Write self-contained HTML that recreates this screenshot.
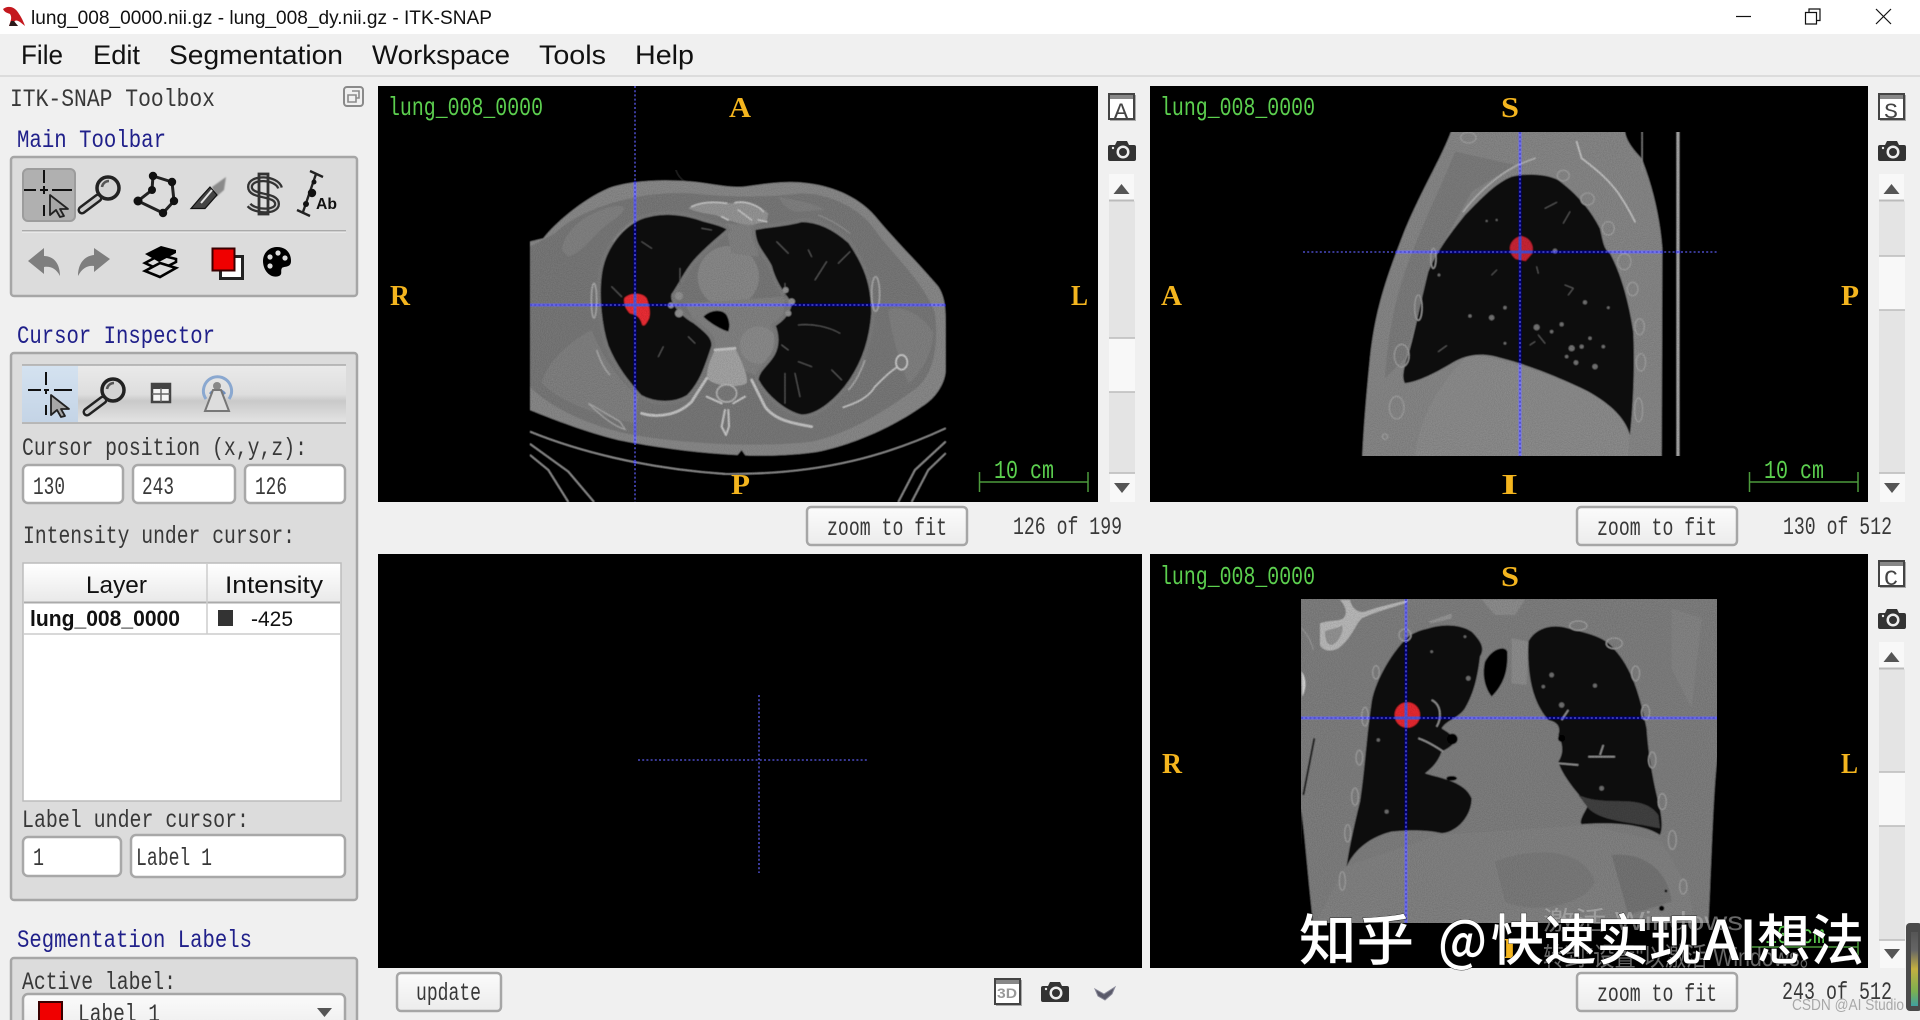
<!DOCTYPE html>
<html lang="zh"><head><meta charset="utf-8"><title>ITK-SNAP</title>
<style>
html,body{margin:0;padding:0;background:#f0f0f0;width:1920px;height:1020px;overflow:hidden}
svg{display:block}
.m{font-family:"Liberation Mono",monospace;font-size:25px;fill:#383838}
.h{font-family:"Liberation Mono",monospace;font-size:25px;fill:#20208a}
.g{font-family:"Liberation Mono",monospace;font-size:26px;fill:#5ccf4f}
.o{font-family:"Liberation Serif",serif;font-weight:bold;font-size:28px;fill:#f4b51e}
.s{font-family:"Liberation Sans",sans-serif;fill:#111}
.box{fill:#dcdcdc;stroke:#a6a6a6;stroke-width:2.5}
.inp{fill:#fff;stroke:#a8a8a8;stroke-width:2.5}
.btn{fill:url(#btn);stroke:#a6a6a6;stroke-width:2.5}
.x{stroke:#4a4ac4;stroke-width:1.6;stroke-dasharray:2 2.2;fill:none}
.xb{stroke:#5a5ad8;stroke-width:3;fill:none;mix-blend-mode:color}
.lung{fill:#0d0d0d}
.bone{fill:none;stroke:#bcbcbc;stroke-linecap:round;stroke-linejoin:round}
.rib{fill:none;stroke:#989898;stroke-width:4}
.ves{fill:none;stroke:#626262;stroke-width:2.5;stroke-linecap:round}
.wm{font-family:"Noto Sans CJK SC",sans-serif;font-size:55px;font-weight:500;fill:#fff;stroke:#111;stroke-width:.8;paint-order:stroke}
</style></head><body>
<svg xmlns="http://www.w3.org/2000/svg" width="1920" height="1020" viewBox="0 0 1920 1020">
<defs>
<linearGradient id="btn" x1="0" y1="0" x2="0" y2="1"><stop offset="0" stop-color="#fbfbfb"/><stop offset="1" stop-color="#ececec"/></linearGradient>
<linearGradient id="strip" x1="0" y1="0" x2="0" y2="1"><stop offset="0" stop-color="#eaeaea"/><stop offset=".5" stop-color="#dedede"/><stop offset=".62" stop-color="#c9c9c9"/><stop offset="1" stop-color="#e4e4e4"/></linearGradient>
<linearGradient id="sel" x1="0" y1="0" x2="0" y2="1"><stop offset="0" stop-color="#d4e2f0"/><stop offset="1" stop-color="#c4d4e6"/></linearGradient>
<linearGradient id="hd" x1="0" y1="0" x2="0" y2="1"><stop offset="0" stop-color="#fff"/><stop offset="1" stop-color="#e9e9e9"/></linearGradient>
<linearGradient id="vm" x1="0" y1="0" x2="0" y2="1"><stop offset="0" stop-color="#555"/><stop offset=".25" stop-color="#666"/><stop offset=".5" stop-color="#c4b040"/><stop offset=".8" stop-color="#7cb050"/><stop offset="1" stop-color="#40a0a0"/></linearGradient>
<filter id="soft" filterUnits="userSpaceOnUse" x="0" y="0" width="1300" height="1010">
<feGaussianBlur in="SourceGraphic" stdDeviation="1.8" result="b"/>
<feTurbulence type="fractalNoise" baseFrequency=".33" numOctaves="2" seed="4" result="n"/>
<feColorMatrix in="n" type="matrix" values="1 0 0 0 0 1 0 0 0 0 1 0 0 0 0 0 0 0 0 1" result="g"/>
<feComposite in="b" in2="g" operator="arithmetic" k1=".5" k2=".74" k3="0" k4="0"/>
</filter>
<filter id="bl"><feGaussianBlur stdDeviation=".8"/></filter>
<clipPath id="cTL"><rect x="378" y="86" width="720" height="416"/></clipPath>
<clipPath id="cTR"><rect x="1302" y="132" width="415" height="324"/></clipPath>
<clipPath id="cBR"><rect x="1301" y="599" width="416" height="324"/></clipPath>
<g id="cam"><path d="M-12,-6 h5 l2,-4 h10 l2,4 h5 a2,2 0 0 1 2,2 v12 a2,2 0 0 1 -2,2 h-24 a2,2 0 0 1 -2,-2 v-12 a2,2 0 0 1 2,-2z" fill="#333"/><circle cx="1" cy="1" r="6.5" fill="#eee"/><circle cx="1" cy="1" r="4" fill="#333"/><circle cx="-9" cy="-3" r="1.2" fill="#eee"/></g>
<g id="win"><rect x="2" y="2" width="26" height="26" fill="#aaa"/><rect x="1" y="1" width="25" height="25" fill="#fff" stroke="#444" stroke-width="2"/><rect x="2" y="2" width="23" height="4" fill="#888"/></g>
<g id="scr"><path d="M1,0 h25 v26 h-25z" fill="#f8f8f8"/><path d="M5.5,20 L13.5,10 L21.5,20z" fill="#555"/><line x1="1" y1="26.5" x2="26" y2="26.5" stroke="#bbb" stroke-width="2"/></g>
<g id="mag"><path d="M-8,8 L-24,20" stroke="#222" stroke-width="9" stroke-linecap="round"/><path d="M-8,8 L-24,20" stroke="#ccc" stroke-width="4" stroke-linecap="round"/><circle cx="2" cy="-2" r="11" fill="#d4d4d4" stroke="#222" stroke-width="3.5"/><path d="M-4,-3 a7,7 0 0 1 7,-6" stroke="#555" stroke-width="2.5" fill="none"/></g>
<g id="arr"><path d="M0,0 L18,14 L10,14 L14,21 L10,22 L6,15 L0,20z" fill="#a6a6a6" stroke="#222" stroke-width="1.8" stroke-linejoin="round"/></g>
</defs>

<rect width="1920" height="1020" fill="#f0f0f0"/>
<!-- title bar -->
<rect width="1920" height="34" fill="#fff"/>
<path d="M3,9 C8,5 14,7 17,11 C20,15 23,20 25,26 L20,22 C17,20 15,20 14,22 L18,26 L9,26 L10,23 C11,20 12,17 10,14 C8,13 5,13 3,9z" fill="#c4181e"/>
<path d="M14,21 L18,26 L9,26 L11,21z" fill="#2b1a1a"/>
<text class="s" x="31" y="24" font-size="19" textLength="461" lengthAdjust="spacingAndGlyphs">lung_008_0000.nii.gz - lung_008_dy.nii.gz - ITK-SNAP</text>
<path d="M1736,16.5 h15" stroke="#111" stroke-width="1.2"/>
<path d="M1805.5,12.5 h11 v11.5 h-11z M1809,12.5 v-3.5 h11 v11.5 h-3.5" fill="none" stroke="#111" stroke-width="1.2"/>
<path d="M1876,9 L1891,24 M1891,9 L1876,24" stroke="#111" stroke-width="1.2"/>
<!-- menu -->
<rect y="75" width="1920" height="2" fill="#dcdcdc"/>
<g class="s" font-size="27">
<text x="21" y="64" textLength="42" lengthAdjust="spacingAndGlyphs">File</text>
<text x="93" y="64" textLength="47" lengthAdjust="spacingAndGlyphs">Edit</text>
<text x="169" y="64" textLength="174" lengthAdjust="spacingAndGlyphs">Segmentation</text>
<text x="372" y="64" textLength="138" lengthAdjust="spacingAndGlyphs">Workspace</text>
<text x="539" y="64" textLength="67" lengthAdjust="spacingAndGlyphs">Tools</text>
<text x="635" y="64" textLength="59" lengthAdjust="spacingAndGlyphs">Help</text>
</g>

<!-- sidebar -->
<text class="m" x="10" y="106" font-size="26" textLength="205" lengthAdjust="spacingAndGlyphs">ITK-SNAP Toolbox</text>
<rect x="344" y="87" width="19" height="19" rx="3" fill="none" stroke="#8a8a8a" stroke-width="2"/>
<path d="M352,91 h7 v7 h-3 M348,95 h8 v7 h-8z" fill="none" stroke="#8a8a8a" stroke-width="1.6"/>
<text class="h" x="17" y="147" textLength="149" lengthAdjust="spacingAndGlyphs">Main Toolbar</text>
<rect class="box" x="11" y="157" width="346" height="139" rx="3"/>
<rect x="23" y="169" width="52" height="52" rx="5" fill="#b0b0b0" stroke="#9c9c9c" stroke-width="2"/>
<path d="M44,170 v13 M44,186 v8 M44,205 v11 M24,190 h12 M40,190 h8 M52,190 h20" stroke="#111" stroke-width="2"/>
<use href="#arr" x="50" y="195"/>
<use href="#mag" x="106" y="190"/>
<path d="M153,176 L172,182 L174,201 L163,213 L138,201 L152,190z" fill="none" stroke="#222" stroke-width="3"/>
<g fill="#111"><circle cx="153" cy="176" r="4.2"/><circle cx="172" cy="182" r="4.2"/><circle cx="174" cy="201" r="4.2"/><circle cx="163" cy="213" r="4.2"/><circle cx="138" cy="201" r="4.5"/><circle cx="152" cy="190" r="4"/></g>
<path d="M212,187 L226,177 L224,190 L216,197z" fill="#8a8a8a" filter="url(#bl)"/>
<path d="M191,208.500 L205,208.500 L217,195 L210,187 L200,198z" fill="#444" stroke="#111" stroke-width="1.2"/>
<path d="M201,203 L212,190" stroke="#e4e4e4" stroke-width="2"/>
<path d="M280,188 C277,177 250,176 250,187 C250,198 277,193 277,204 C277,213 255,212 249,205" fill="none" stroke="#333" stroke-width="6"/>
<path d="M280,188 C277,177 250,176 250,187 C250,198 277,193 277,204 C277,213 255,212 249,205" fill="none" stroke="#ccc" stroke-width="1.5"/>
<rect x="259" y="174" width="9" height="40" fill="none" stroke="#333" stroke-width="2.8"/>
<path d="M316,174 L303,212 M310,171 L323,177 M297,210 L310,216" stroke="#222" stroke-width="2.4"/>
<circle cx="312" cy="193" r="4.2" fill="#111"/><circle cx="306" cy="204" r="3" fill="#111"/><circle cx="314" cy="182" r="2.5" fill="#111"/>
<text class="s" x="316" y="209" font-size="16" font-weight="bold" fill="#222" textLength="21" lengthAdjust="spacingAndGlyphs">Ab</text>
<rect x="22" y="230" width="324" height="1.5" fill="#aaa"/><rect x="22" y="231.5" width="324" height="1" fill="#f4f4f4"/>
<path d="M28,261 L44,248 L44,256 C54,256 60,264 60,276 C56,268 50,266 44,267 L44,274z" fill="#7e7e7e"/>
<path d="M110,259 L94,248 L94,255 C84,256 78,264 78,276 C82,268 88,265 94,266 L94,272z" fill="#7e7e7e"/>
<path d="M160,255 L176,259 L176,262 L160,270 L145,263z" fill="#dcdcdc" stroke="#000" stroke-width="2.6"/>
<path d="M160,263 L176,268 L160,277 L145,271z" fill="#dcdcdc" stroke="#000" stroke-width="2.6"/>
<path d="M161,246 L176,250 L176,253 L159,262 L145,254z" fill="#000"/>
<rect x="220.500" y="256.500" width="22" height="22" fill="#fff" stroke="#222" stroke-width="3"/>
<rect x="212.500" y="248.500" width="22" height="22" fill="#f00000" stroke="#3a0000" stroke-width="2"/>
<path d="M277,247 C287,247 291,254 291,261 C291,268 284,266 282,268 C280,271 283,274 279,276 C270,279 263,270 263,261 C263,253 269,247 277,247z" fill="#000"/>
<g fill="#dcdcdc"><circle cx="270" cy="257" r="2.6"/><circle cx="278" cy="253" r="2.6"/><circle cx="285" cy="258" r="2.6"/><circle cx="270" cy="266" r="2.6"/></g>

<text class="h" x="17" y="343" textLength="198" lengthAdjust="spacingAndGlyphs">Cursor Inspector</text>
<rect class="box" x="11" y="353" width="346" height="547" rx="3"/>
<rect x="22" y="365" width="324" height="58" fill="url(#strip)"/>
<rect x="22" y="366" width="56" height="56" fill="url(#sel)"/>
<path d="M22,365 h324 M22,423 h324" stroke="#aaa" stroke-width="1.5"/>
<path d="M46,372 v13 M46,389 v5 M46,405 v10 M28,390 h13 M44,390 h5 M54,390 h18" stroke="#111" stroke-width="2"/>
<use href="#arr" x="51" y="395"/>
<use href="#mag" x="111" y="392"/>
<rect x="152" y="384" width="18" height="18" fill="#f4f4f4" stroke="#444" stroke-width="2.5"/>
<path d="M152,387 h18" stroke="#444" stroke-width="4"/><path d="M161,388 v14 M152,394 h18" stroke="#666" stroke-width="1.5"/>
<path d="M206,399 a14,14 0 0 1 -2,-12 a14,14 0 0 1 27,0 a14,14 0 0 1 -2,12" fill="none" stroke="#8aa8d0" stroke-width="3"/>
<path d="M210,394 a9,9 0 0 1 15,0" fill="none" stroke="#7090c0" stroke-width="2.5"/>
<circle cx="217" cy="386" r="4" fill="#888"/>
<path d="M213,390 h8 l8,21 h-24z" fill="#ddd" stroke="#777" stroke-width="2"/>
<text class="m" x="22" y="455" font-size="24" textLength="285" lengthAdjust="spacingAndGlyphs">Cursor position (x,y,z):</text>
<rect class="inp" x="23" y="465" width="100" height="38" rx="5"/><rect class="inp" x="133" y="465" width="102" height="38" rx="5"/><rect class="inp" x="245" y="465" width="100" height="38" rx="5"/>
<text class="m" x="33" y="494" font-size="23" textLength="32" lengthAdjust="spacingAndGlyphs">130</text>
<text class="m" x="142" y="494" font-size="23" textLength="32" lengthAdjust="spacingAndGlyphs">243</text>
<text class="m" x="255" y="494" font-size="23" textLength="32" lengthAdjust="spacingAndGlyphs">126</text>
<text class="m" x="23" y="543" font-size="24" textLength="272" lengthAdjust="spacingAndGlyphs">Intensity under cursor:</text>
<rect x="23" y="563" width="318" height="238" fill="#fff" stroke="#bbb" stroke-width="1.5"/>
<rect x="24" y="564" width="316" height="38" fill="url(#hd)"/>
<path d="M24,602.500 h316" stroke="#aaa" stroke-width="2"/><path d="M207,564 V634" stroke="#ccc" stroke-width="1.5"/><path d="M24,634 h316" stroke="#ccc" stroke-width="1.5"/>
<text class="s" x="86" y="593" font-size="24" textLength="61" lengthAdjust="spacingAndGlyphs">Layer</text>
<text class="s" x="225" y="593" font-size="24" textLength="98" lengthAdjust="spacingAndGlyphs">Intensity</text>
<text class="s" x="30" y="626" font-size="22" font-weight="bold" textLength="150" lengthAdjust="spacingAndGlyphs">lung_008_0000</text>
<rect x="218" y="610" width="15" height="16" fill="#333"/>
<text class="s" x="251" y="626" font-size="21" fill="#222" textLength="42" lengthAdjust="spacingAndGlyphs">-425</text>
<text class="m" x="22" y="827" font-size="24" textLength="227" lengthAdjust="spacingAndGlyphs">Label under cursor:</text>
<rect class="inp" x="23" y="837" width="98" height="39" rx="5"/><rect class="inp" x="131" y="835" width="214" height="42" rx="5"/>
<text class="m" x="33" y="865" font-size="23" textLength="11" lengthAdjust="spacingAndGlyphs">1</text>
<text class="m" x="136" y="865" font-size="23" textLength="76" lengthAdjust="spacingAndGlyphs">Label 1</text>
<text class="h" x="17" y="947" textLength="235" lengthAdjust="spacingAndGlyphs">Segmentation Labels</text>
<rect class="box" x="11" y="958" width="346" height="70" rx="3"/>
<text class="m" x="22" y="989" font-size="24" textLength="154" lengthAdjust="spacingAndGlyphs">Active label:</text>
<rect class="btn" x="23" y="994" width="322" height="40" rx="5"/>
<rect x="39" y="1002" width="23" height="24" fill="#f00000" stroke="#3a0000" stroke-width="2"/>
<text class="m" x="78" y="1021" font-size="24" textLength="82" lengthAdjust="spacingAndGlyphs">Label 1</text>
<path d="M317,1008 h15 l-7.500,9z" fill="#555"/>

<!-- viewports -->
<rect x="378" y="86" width="720" height="416" fill="#000"/>
<rect x="1150" y="86" width="718" height="416" fill="#000"/>
<rect x="378" y="554" width="764" height="414" fill="#000"/>
<rect x="1150" y="554" width="718" height="414" fill="#000"/>

<!-- axial -->
<g clip-path="url(#cTL)"><g transform="translate(525 170) scale(.3333)"><g filter="url(#soft)">
<rect x="15" y="-250" width="1250" height="1250" fill="#050505"/>
<g fill="none" stroke="#989898" stroke-width="4">
<path d="M15,785 C150,840 350,895 600,912 C900,915 1100,850 1262,775"/>
<path d="M15,822 L130,905 L207,996 M15,855 L70,900 L130,996 M1262,815 L1170,900 L1120,996 M1262,850 L1210,900 L1160,996"/>
</g>
<path d="M450,-15 C455,40 520,60 560,50" fill="none" stroke="#2c2c2c" stroke-width="3"/>
<path d="M15,215 L55,205 C90,160 170,90 250,55 C320,30 420,28 500,35 C560,40 610,55 660,50 C720,42 780,30 850,40 C930,50 1010,85 1060,150 C1110,210 1190,290 1240,350 C1262,385 1262,420 1262,470 L1262,600 C1262,630 1240,680 1190,710 C1120,760 1000,820 880,845 C820,855 720,860 640,855 C520,850 380,830 280,810 C180,785 90,750 15,720z" fill="#828282"/>
<path d="M90,190 C160,120 330,60 500,70 C600,80 700,85 830,70 C920,70 1010,120 1050,180 C1100,250 1200,340 1230,430 C1240,520 1230,600 1180,650 C1100,710 980,790 860,815 C700,835 450,820 300,790 C170,760 60,700 15,650 L15,230z" fill="#727272"/>
<path d="M110,240 C120,180 180,130 260,110 C320,100 300,130 250,160 C210,190 170,250 130,260z" fill="#7c7c7c"/>
<path d="M760,80 C800,90 860,95 900,120 L820,125 C790,125 770,100 760,80z" fill="#7a7a7a"/>
<path d="M50,640 C60,590 120,520 200,480 C230,560 290,640 340,680 L330,760 C230,740 110,700 50,640z" fill="#7a7a7a"/>
<path d="M1090,420 C1130,400 1200,440 1225,490 C1220,560 1180,620 1150,640 C1120,560 1100,500 1090,420z" fill="#7a7a7a"/>
<circle cx="610" cy="320" r="92" fill="#828282"/>
<path d="M600,160 L690,165 L700,260 L620,250z" fill="#7c7c7c"/>
<path d="M480,400 L780,380 L770,500 L700,620 L560,560z" fill="#7c7c7c"/>
<circle cx="700" cy="525" r="56" fill="#848484"/>
<g stroke="#767676" stroke-width="12">
<path class="lung" d="M225,310 C235,240 280,175 340,145 C400,120 470,125 540,150 C580,160 610,170 612,180 C590,200 550,230 510,275 C480,310 470,340 445,375 C440,400 480,440 510,455 C540,480 570,500 565,530 C545,590 530,640 490,680 C450,705 390,705 345,680 C300,630 270,590 245,530 C225,470 215,380 225,310z"/>
<path class="lung" d="M685,175 C730,165 780,165 830,150 C880,150 930,175 975,215 C1020,280 1045,340 1045,430 C1040,500 1020,570 980,630 C940,690 880,740 830,740 C780,730 720,680 695,630 C695,600 730,580 745,550 C760,520 755,490 745,465 C770,450 790,430 795,400 C770,370 745,330 735,290 C715,250 685,230 685,175z"/>
</g>
<path d="M535,440 C555,420 590,415 605,435 C615,455 615,470 610,485 C590,480 555,460 535,440z" fill="#000"/>
<path d="M490,115 C520,95 580,95 620,100 C650,90 700,100 730,130 L725,155 L680,165 C640,165 600,145 570,135 C540,130 510,125 490,115z" fill="#8e8e8e"/>
<g class="bone" stroke-width="5"><path d="M500,110 C530,95 570,95 605,100 M630,98 C660,92 700,105 715,125 M590,140 L610,150 M640,120 L680,150 M700,150 L725,155"/></g>
<path d="M570,540 L630,535 C650,570 670,620 665,640 C640,655 570,650 545,625 C545,590 560,560 570,540z" fill="#9c9c9c"/>
<g class="bone"><path stroke-width="8" d="M350,730 C400,745 460,735 500,695 L545,625 M860,770 C800,760 750,750 720,710 L680,630 M570,540 L630,535"/>
<path stroke-width="6" d="M545,680 L590,700 M660,680 L625,700 M600,720 L590,770 L603,795 L612,770 L610,720"/>
<path stroke-width="5" d="M955,712 C990,700 1030,685 1050,650 C1075,625 1100,600 1120,590"/></g>
<ellipse cx="1130" cy="577" rx="17" ry="22" fill="#777" stroke="#c4c4c4" stroke-width="5"/>
<ellipse cx="605" cy="670" rx="30" ry="26" fill="#747474" stroke="#aaa" stroke-width="5"/>
<g fill="none" stroke="#a0a0a0" stroke-width="5"><ellipse cx="207" cy="392" rx="8" ry="52"/><ellipse cx="1052" cy="372" rx="12" ry="52"/><path d="M215,540 C225,570 240,600 255,615"/><path d="M1020,570 C1010,600 990,640 970,660"/><path d="M190,700 C230,740 270,770 300,778 L285,755 C250,735 210,710 190,700" stroke-width="4"/><path d="M265,215 C285,185 310,165 335,150" stroke-width="3" stroke="#8c8c8c"/><path d="M880,135 C920,150 950,170 975,190" stroke-width="3" stroke="#8c8c8c"/></g>
<g class="ves"><path d="M350,215 L380,235 M530,175 L560,180 M755,215 L790,250 M850,240 L860,260 M870,330 L905,275 M940,280 L975,245 M465,295 L465,345 M780,340 V380 M820,465 C860,460 910,470 945,490 M400,560 L415,530 M490,500 L510,520 M820,575 L860,590 M780,610 L780,700 M810,610 L825,680 M770,525 L790,540 M920,600 L950,630 M260,350 L290,380"/></g>
<g fill="#8a8a8a"><circle cx="462" cy="378" r="12"/><circle cx="438" cy="406" r="9"/><circle cx="462" cy="430" r="12"/><circle cx="782" cy="360" r="9"/><circle cx="800" cy="395" r="10"/><circle cx="790" cy="430" r="9"/></g>
<path d="M298,385 C310,370 350,365 365,385 C372,405 378,425 372,445 C365,460 358,470 352,465 C345,440 335,435 315,430 C305,420 295,405 298,385z" fill="#e02a30"/>
<path d="M632,862 L650,840 L665,862z" fill="#000"/>
</g></g></g>
<!-- sagittal -->
<g clip-path="url(#cTR)"><g transform="translate(1295 125) scale(.3333)"><g filter="url(#soft)">
<rect x="15" y="21" width="1250" height="972" fill="#060606"/>
<path d="M470,15 C440,100 370,210 320,340 C270,470 240,560 225,700 C210,850 205,930 202,1000 L1100,1000 L1102,370 C1095,280 1075,190 1040,100 C1010,70 990,40 990,15z" fill="#808080"/>
<path d="M480,80 C450,160 400,260 360,360 C310,480 280,600 270,760 L330,700 L420,400 L530,200 L660,120z" fill="#767676"/>
<path d="M360,1000 C370,880 430,780 520,690 C600,690 800,760 890,805 C950,840 990,880 1003,935 L1000,1000z" fill="#858585"/>
<path class="lung" d="M650,155 C690,145 750,145 790,165 C850,210 890,260 915,310 C925,350 925,370 945,385 C975,440 1000,520 1015,620 C1020,720 1015,840 1005,930 C990,880 950,840 880,800 C800,760 700,720 620,700 C560,680 510,690 470,715 C420,745 370,770 330,775 C320,760 325,730 340,690 C360,620 375,540 400,440 C430,370 470,320 510,270 C560,220 600,175 650,155z" fill="#131313"/>
<rect x="1145" y="15" width="8" height="985" fill="#a6a6a6"/><rect x="1040" y="15" width="3" height="125" fill="#8a8a8a"/>
<g class="bone"><path stroke-width="5" d="M505,260 C550,200 620,140 680,115 L720,100" stroke="#a8a8a8"/><path stroke-width="5" d="M845,50 L860,100 C900,130 950,170 980,220 C1000,250 1015,280 1020,290"/></g>
<g class="rib"><ellipse cx="520" cy="38" rx="23" ry="16"/><ellipse cx="805" cy="152" rx="18" ry="16"/><ellipse cx="878" cy="222" rx="20" ry="18"/><ellipse cx="940" cy="310" rx="18" ry="20"/><ellipse cx="988" cy="410" rx="20" ry="24"/><ellipse cx="1013" cy="492" rx="16" ry="20"/><ellipse cx="1034" cy="605" rx="14" ry="24"/><ellipse cx="1038" cy="712" rx="14" ry="26"/><ellipse cx="1031" cy="855" rx="12" ry="36"/><ellipse cx="320" cy="692" rx="22" ry="34"/><ellipse cx="370" cy="548" rx="11" ry="38"/><ellipse cx="415" cy="400" rx="8" ry="30"/><ellipse cx="305" cy="848" rx="22" ry="34"/><ellipse cx="270" cy="935" rx="8" ry="8"/></g>
<g fill="#6e6e6e"><circle cx="725" cy="607" r="9"/><circle cx="590" cy="578" r="8"/><circle cx="830" cy="670" r="9"/><circle cx="800" cy="598" r="6"/><circle cx="843" cy="713" r="7"/><circle cx="900" cy="725" r="8"/><circle cx="860" cy="665" r="6"/><circle cx="815" cy="695" r="5"/><circle cx="885" cy="640" r="5"/><circle cx="630" cy="548" r="5"/><circle cx="525" cy="573" r="5"/><circle cx="870" cy="532" r="6"/><circle cx="770" cy="620" r="5"/><circle cx="940" cy="548" r="4"/><circle cx="780" cy="378" r="7"/><circle cx="630" cy="655" r="4"/><circle cx="925" cy="665" r="5"/><circle cx="432" cy="450" r="4"/><circle cx="575" cy="288" r="3"/><circle cx="605" cy="285" r="3"/></g>
<g class="ves"><path d="M750,250 L785,232 M805,295 L825,260 M590,450 L605,435 M430,680 L455,662 M730,630 L750,655 M725,425 L730,445 M810,480 L835,490 M705,660 L720,650 M820,510 L835,490"/></g>
<path d="M677,333 C705,338 718,360 712,385 L692,408 L662,402 C635,380 640,345 677,333z" fill="#c02030"/>
</g></g></g>
<!-- coronal -->
<g clip-path="url(#cBR)"><g transform="translate(1295 595) scale(.3333)"><g filter="url(#soft)">
<rect x="15" y="10" width="1255" height="980" fill="#787878"/>
<path d="M560,14 L690,14 L660,60 L600,60z" fill="#868686"/>
<path d="M400,80 L470,55 L470,70 L410,85z" fill="#8e8e8e"/>
<path d="M1130,40 L1220,70 L1190,340 L1130,220z" fill="#7e7e7e"/>
<path d="M430,720 L880,690 L1100,740 L1180,880 L1200,985 L60,985 L150,815z" fill="#7c7c7c"/>
<path d="M600,800 C700,760 860,750 900,860 C870,930 720,960 630,920z" fill="#747474"/>
<path d="M950,780 C1050,770 1120,830 1130,920 L1000,960z" fill="#6e6e6e"/>
<path d="M18,640 C30,720 40,860 55,990 L10,990z M1270,470 C1255,560 1250,800 1240,990 L1275,990z" fill="#000"/>
<path d="M75,85 C100,75 130,80 145,70 C160,55 150,30 135,15 L165,15 C170,40 190,55 210,50 C250,35 300,25 340,15 L330,25 C280,40 230,55 200,70 C180,90 170,130 130,160 C110,170 85,170 75,150z" fill="#b0b0b0"/>
<path d="M90,110 C105,100 135,100 140,90 C150,105 130,145 110,150 C95,150 90,130 90,110z" fill="#8c8c8c"/>
<path d="M20,230 C35,250 35,280 22,305z" fill="#c8c8c8"/>
<path d="M20,100 C40,120 50,145 55,165" stroke="#949494" stroke-width="3" fill="none"/>
<path d="M58,430 L25,600" stroke="#1a1a1a" stroke-width="6"/>
<path class="lung" d="M400,100 C450,85 500,90 530,110 C560,140 570,160 555,185 C550,230 540,290 510,340 C490,370 455,375 440,400 C490,430 490,445 440,470 C430,500 410,520 390,535 C440,550 510,560 530,610 C530,660 490,710 440,715 C400,705 340,705 290,710 C230,725 180,760 155,815 C160,770 180,680 195,620 C210,520 215,420 230,320 C240,260 290,170 340,125 C360,110 380,105 400,100z"/>
<path class="lung" d="M700,140 C720,100 770,85 820,100 C880,115 930,125 960,165 C1010,220 1035,300 1055,400 C1060,480 1075,560 1090,620 C1100,660 1105,700 1095,720 C1050,690 960,680 860,688 C850,680 870,650 880,630 C850,600 800,540 790,500 C810,470 800,440 790,420 C800,390 780,380 760,375 C730,340 695,280 700,140z"/>
<path d="M570,200 C590,160 630,150 637,170 C640,230 625,270 590,305 C570,280 560,240 570,200z" fill="#030303"/>
<path d="M650,130 L700,140 L695,270 L650,265z" fill="#868686"/>
<path d="M850,600 C940,640 1040,590 1090,660 L1095,700 C1000,680 920,680 880,640z" fill="#3e3e3e"/>
<circle cx="472" cy="432" r="16" fill="#050505"/><ellipse cx="470" cy="550" rx="16" ry="7" fill="#050505"/><circle cx="800" cy="430" r="11" fill="#050505"/>
<g fill="none" stroke="#8e8e8e" stroke-width="5"><path d="M410,315 C440,330 440,370 425,395"/><path d="M370,430 C400,440 430,460 445,470"/><path d="M880,485 L960,485"/><path d="M790,505 L850,510"/><path d="M820,345 L800,375"/><path d="M925,450 L915,480"/></g>
<g class="rib"><ellipse cx="330" cy="120" rx="18" ry="18"/><ellipse cx="243" cy="232" rx="10" ry="20"/><ellipse cx="210" cy="365" rx="10" ry="28"/><ellipse cx="193" cy="488" rx="10" ry="22"/><ellipse cx="180" cy="605" rx="10" ry="26"/><ellipse cx="158" cy="715" rx="9" ry="26"/><ellipse cx="142" cy="858" rx="9" ry="28"/><ellipse cx="850" cy="92" rx="26" ry="14"/><ellipse cx="958" cy="145" rx="24" ry="16"/><ellipse cx="1022" cy="235" rx="12" ry="22"/><ellipse cx="1052" cy="352" rx="12" ry="22"/><ellipse cx="1072" cy="495" rx="11" ry="24"/><ellipse cx="1102" cy="620" rx="12" ry="24"/><ellipse cx="1132" cy="735" rx="12" ry="28"/><ellipse cx="1165" cy="875" rx="11" ry="22"/></g>
<g fill="#6a6a6a"><circle cx="410" cy="170" r="4"/><circle cx="510" cy="125" r="4"/><circle cx="520" cy="250" r="7"/><circle cx="770" cy="240" r="7"/><circle cx="800" cy="330" r="8"/><circle cx="745" cy="275" r="5"/><circle cx="900" cy="272" r="6"/><circle cx="920" cy="580" r="7"/><circle cx="250" cy="435" r="5"/><circle cx="275" cy="650" r="6"/></g>
<circle cx="1100" cy="940" r="8" fill="#000"/><circle cx="1113" cy="888" r="4" fill="#000"/>
<circle cx="337" cy="360" r="38" fill="#dc282e"/>
</g></g></g>

<!-- crosshairs -->
<path class="xb" d="M530,305 H946"/><path class="xb" d="M635,132 V502"/><path class="xb" d="M1303,252 H1717"/><path class="xb" d="M1520,132 V456"/><path class="xb" d="M1301,718 H1717"/><path class="xb" d="M1406,599 V923"/>
<path class="x" d="M530,305 H946 M635,86 V502"/>
<path class="x" d="M1303,252 H1717 M1520,132 V456"/>
<path class="x" d="M1301,718 H1717 M1406,599 V923"/>
<path class="x" stroke-width="1.4" d="M638,760 H868 M759,695 V873"/>

<!-- labels -->
<text class="g" x="388" y="115" textLength="155" lengthAdjust="spacingAndGlyphs">lung_008_0000</text>
<text class="g" x="1160" y="115" textLength="155" lengthAdjust="spacingAndGlyphs">lung_008_0000</text>
<text class="g" x="1160" y="584" textLength="155" lengthAdjust="spacingAndGlyphs">lung_008_0000</text>
<text class="o" x="729" y="117" textLength="22" lengthAdjust="spacingAndGlyphs">A</text>
<text class="o" x="390" y="305" textLength="20" lengthAdjust="spacingAndGlyphs">R</text>
<text class="o" x="1071" y="305" textLength="17" lengthAdjust="spacingAndGlyphs">L</text>
<text class="o" x="731" y="494" textLength="19" lengthAdjust="spacingAndGlyphs">P</text>
<text class="o" x="1501" y="117" textLength="18" lengthAdjust="spacingAndGlyphs">S</text>
<text class="o" x="1161" y="305" textLength="21" lengthAdjust="spacingAndGlyphs">A</text>
<text class="o" x="1841" y="305" textLength="18" lengthAdjust="spacingAndGlyphs">P</text>
<text class="o" x="1501" y="494" textLength="17" lengthAdjust="spacingAndGlyphs">I</text>
<text class="o" x="1501" y="586" textLength="18" lengthAdjust="spacingAndGlyphs">S</text>
<text class="o" x="1162" y="773" textLength="20" lengthAdjust="spacingAndGlyphs">R</text>
<text class="o" x="1841" y="773" textLength="17" lengthAdjust="spacingAndGlyphs">L</text>
<text class="o" x="1501" y="958" textLength="17" lengthAdjust="spacingAndGlyphs">I</text>
<!-- scale bars -->
<g stroke="#4c9a3c" stroke-width="1.5" fill="none"><path d="M979,482 H1088 M979.500,472 V492 M1088,472 V492"/><path d="M1749,482 H1858 M1749.500,472 V492 M1858,472 V492"/><path d="M1749,947 H1858 M1749.500,937 V957 M1858,937 V957"/></g>
<text class="g" x="994" y="478" textLength="60" lengthAdjust="spacingAndGlyphs">10 cm</text>
<text class="g" x="1764" y="478" textLength="60" lengthAdjust="spacingAndGlyphs">10 cm</text>
<text class="g" x="1765" y="943" textLength="60" lengthAdjust="spacingAndGlyphs">10 cm</text>

<!-- side tools -->
<use href="#win" x="1108" y="93"/><text x="1114" y="118" font-family="Liberation Mono,monospace" font-size="22" fill="#444" textLength="14" lengthAdjust="spacingAndGlyphs">A</text>
<use href="#cam" x="1122" y="151"/>
<use href="#win" x="1878" y="93"/><text x="1884" y="118" font-family="Liberation Mono,monospace" font-size="22" fill="#444" textLength="14" lengthAdjust="spacingAndGlyphs">S</text>
<use href="#cam" x="1892" y="151"/>
<use href="#win" x="1878" y="560"/><text x="1884" y="585" font-family="Liberation Mono,monospace" font-size="22" fill="#444" textLength="14" lengthAdjust="spacingAndGlyphs">C</text>
<use href="#cam" x="1892" y="619"/>
<!-- scrollbars -->
<g>
<rect x="1109" y="201" width="26" height="272" fill="#e4e4e4"/><rect x="1109" y="338" width="26" height="54" fill="#f8f8f8"/><path d="M1109,338 h26 M1109,392 h26 M1109,473 h26" stroke="#bbb" stroke-width="1.5"/>
<rect x="1110" y="474" width="25" height="28" fill="#f8f8f8"/><use href="#scr" x="1108" y="174"/><path d="M1114,483 h16 l-8,10z" fill="#555"/>
<rect x="1879" y="201" width="26" height="272" fill="#e4e4e4"/><rect x="1879" y="256" width="26" height="54" fill="#f8f8f8"/><path d="M1879,256 h26 M1879,310 h26 M1879,473 h26" stroke="#bbb" stroke-width="1.5"/>
<rect x="1880" y="474" width="25" height="28" fill="#f8f8f8"/><use href="#scr" x="1878" y="174"/><path d="M1884,483 h16 l-8,10z" fill="#555"/>
<rect x="1879" y="669" width="26" height="271" fill="#e4e4e4"/><rect x="1879" y="772" width="26" height="54" fill="#f8f8f8"/><path d="M1879,772 h26 M1879,826 h26 M1879,940 h26" stroke="#bbb" stroke-width="1.5"/>
<rect x="1880" y="941" width="25" height="27" fill="#f8f8f8"/><use href="#scr" x="1878" y="642"/><path d="M1884,949 h16 l-8,10z" fill="#555"/>
</g>
<!-- bottom controls -->
<rect class="btn" x="807" y="507" width="160" height="38" rx="4"/>
<text class="m" x="827" y="535" font-size="23" textLength="120" lengthAdjust="spacingAndGlyphs">zoom to fit</text>
<text class="m" x="1013" y="534" font-size="24" textLength="109" lengthAdjust="spacingAndGlyphs">126 of 199</text>
<rect class="btn" x="1577" y="507" width="160" height="38" rx="4"/>
<text class="m" x="1597" y="535" font-size="23" textLength="120" lengthAdjust="spacingAndGlyphs">zoom to fit</text>
<text class="m" x="1783" y="534" font-size="24" textLength="109" lengthAdjust="spacingAndGlyphs">130 of 512</text>
<rect class="btn" x="1577" y="973" width="160" height="38" rx="4"/>
<text class="m" x="1597" y="1001" font-size="23" textLength="120" lengthAdjust="spacingAndGlyphs">zoom to fit</text>
<text class="m" x="1782" y="999" font-size="24" textLength="110" lengthAdjust="spacingAndGlyphs">243 of 512</text>
<rect class="btn" x="397" y="973" width="104" height="38" rx="4"/>
<text class="m" x="416" y="1000" font-size="23" textLength="65" lengthAdjust="spacingAndGlyphs">update</text>
<use href="#win" x="994" y="978"/><text x="997" y="998" font-family="Liberation Sans,sans-serif" font-size="14" font-weight="bold" fill="#999" textLength="20" lengthAdjust="spacingAndGlyphs">3D</text>
<use href="#cam" x="1055" y="992"/>
<path d="M1095,989 l9,5 l11,-7 l-3,7 l-7,6 l-7,-4z" fill="#5a5a6a" stroke="#8a8a9a"/>

<!-- overlays -->
<text x="1543" y="930" font-family="Liberation Sans,'Noto Sans CJK SC',sans-serif" font-size="26" fill="#bbb" fill-opacity=".55" textLength="200" lengthAdjust="spacingAndGlyphs">激活 Windows</text>
<text x="1543" y="966" font-family="Liberation Sans,'Noto Sans CJK SC',sans-serif" font-size="26" fill="#bbb" fill-opacity=".55" textLength="278" lengthAdjust="spacingAndGlyphs">转到"设置"以激活 Windows。</text>
<text class="wm" x="1299" y="960" textLength="115" lengthAdjust="spacingAndGlyphs">知乎</text>
<text class="wm" x="1438" y="960" font-weight="400" textLength="49" lengthAdjust="spacingAndGlyphs">@</text>
<text class="wm" x="1491" y="960" textLength="211" lengthAdjust="spacingAndGlyphs">快速实现</text>
<text class="wm" x="1703" y="960" textLength="54" lengthAdjust="spacingAndGlyphs">AI</text>
<text class="wm" x="1757" y="960" textLength="107" lengthAdjust="spacingAndGlyphs">想法</text>
<text x="1792" y="1010" font-family="Liberation Sans,sans-serif" font-size="16" fill="#a8a8a8" textLength="112" lengthAdjust="spacingAndGlyphs">CSDN @AI Studio</text>
<rect x="1906" y="923" width="16" height="88" rx="4" fill="#4a4a4a"/><rect x="1911" y="932" width="7" height="74" fill="url(#vm)"/>
</svg>
</body></html>
